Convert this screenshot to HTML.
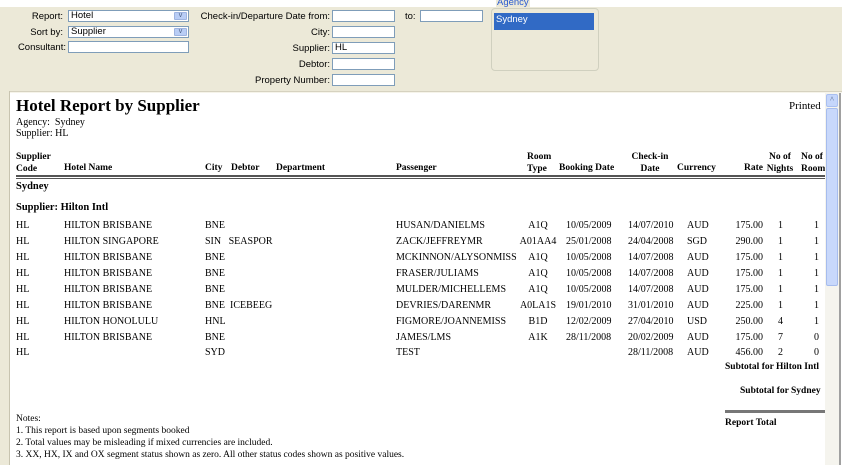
<!DOCTYPE html>
<html><head><meta charset="utf-8"><style>
*{margin:0;padding:0;box-sizing:border-box}
body{width:848px;height:465px;overflow:hidden;background:#fff;position:relative;font-family:"Liberation Serif",serif;font-size:10px;color:#000}
.a{position:absolute;white-space:nowrap}
.f{font-family:"Liberation Sans",sans-serif;font-size:9.5px;color:#000}
.in{position:absolute;height:12px;background:#fff;border:1px solid #7f9db9;font-family:"Liberation Sans",sans-serif;font-size:9.5px;line-height:10px;padding-left:2px}
.sel .ar{position:absolute;right:1px;top:1px;width:13px;height:8px;background:#b9cdf5;border:1px solid #9fb4e0;border-radius:1px;font-size:7px;line-height:6px;text-align:center;color:#4d6185}
.b{font-weight:bold}
.r{text-align:right}
.c{text-align:center}
</style></head><body>
<div class="a" style="left:0;top:7px;width:842px;height:84px;background:#ECE9D8"></div>
<div class="a" style="left:0;top:91px;width:10px;height:374px;background:#ECE9D8;border-right:1px solid #c8c4b0"></div>
<div class="a" style="left:10px;top:91px;width:832px;height:2px;background:#f6f4ea;border-top:1px solid #d6d2c0"></div>

<div class="a f r" style="left:0;width:63px;top:11px">Report:</div>
<div class="in sel" style="left:68px;top:10px;width:121px">Hotel<span class="ar">v</span></div>
<div class="a f r" style="left:0;width:63px;top:27px">Sort by:</div>
<div class="in sel" style="left:68px;top:26px;width:121px">Supplier<span class="ar">v</span></div>
<div class="a f r" style="left:0;width:66px;top:42px">Consultant:</div>
<div class="in" style="left:68px;top:41px;width:121px"></div>

<div class="a f r" style="left:150px;width:180px;top:11px">Check-in/Departure Date from:</div>
<div class="in" style="left:332px;top:10px;width:63px"></div>
<div class="a f" style="left:405px;top:11px">to:</div>
<div class="in" style="left:420px;top:10px;width:63px"></div>
<div class="a f r" style="left:150px;width:180px;top:27px">City:</div>
<div class="in" style="left:332px;top:26px;width:63px"></div>
<div class="a f r" style="left:150px;width:180px;top:43px">Supplier:</div>
<div class="in" style="left:332px;top:42px;width:63px">HL</div>
<div class="a f r" style="left:150px;width:180px;top:59px">Debtor:</div>
<div class="in" style="left:332px;top:58px;width:63px"></div>
<div class="a f r" style="left:150px;width:180px;top:75px">Property Number:</div>
<div class="in" style="left:332px;top:74px;width:63px"></div>

<div class="a" style="left:491px;top:8px;width:108px;height:63px;border:1px solid #d0d0bf;border-radius:4px"></div>
<div class="a f" style="left:496px;top:0px;color:#2a5bd0;background:#ECE9D8;padding:0 1px;height:8px;overflow:hidden;line-height:6px">Agency</div>
<div class="a f" style="left:494px;top:13px;width:100px;height:17px;background:#316AC5;color:#fff;padding:1px 2px">Sydney</div>

<div class="a" style="left:825px;top:93px;width:14px;height:372px;background:#f5f4ee"></div>
<div class="a" style="left:826px;top:94px;width:12px;height:13px;background:#c5d6fb;border:1px solid #a9bff0;border-radius:2px;font-size:8px;text-align:center;line-height:10px;color:#4d6185">^</div>
<div class="a" style="left:826px;top:108px;width:12px;height:178px;background:#c8d8fb;border:1px solid #a6bced;border-radius:2px"></div>
<div class="a" style="left:839px;top:93px;width:2px;height:372px;background:#a0a0a0"></div>

<div class="a b" style="left:16px;top:96px;font-size:17px">Hotel Report by Supplier</div>
<div class="a" style="left:789px;top:100px;font-size:11px">Printed</div>
<div class="a" style="left:16px;top:117px">Agency: &nbsp;Sydney</div>
<div class="a" style="left:16px;top:128px">Supplier: HL</div>

<div class="a b" style="left:16px;top:151px;font-size:9.5px;line-height:12px">Supplier<br>Code</div>
<div class="a b" style="left:64px;top:163px;font-size:9.5px">Hotel Name</div>
<div class="a b" style="left:205px;top:163px;font-size:9.5px">City</div>
<div class="a b" style="left:231px;top:163px;font-size:9.5px">Debtor</div>
<div class="a b" style="left:276px;top:163px;font-size:9.5px">Department</div>
<div class="a b" style="left:396px;top:163px;font-size:9.5px">Passenger</div>
<div class="a b" style="left:527px;top:151px;font-size:9.5px;line-height:12px">Room<br>Type</div>
<div class="a b" style="left:559px;top:163px;font-size:9.5px">Booking Date</div>
<div class="a b c" style="left:624px;width:52px;top:151px;font-size:9.5px;line-height:12px">Check-in<br>Date</div>
<div class="a b" style="left:677px;top:163px;font-size:9.5px">Currency</div>
<div class="a b" style="left:744px;top:163px;font-size:9.5px">Rate</div>
<div class="a b c" style="left:764px;width:32px;top:151px;font-size:9.5px;line-height:12px">No of<br>Nights</div>
<div class="a b" style="left:801px;top:151px;font-size:9.5px;line-height:12px;width:24px;overflow:hidden">No of<br>Rooms</div>
<div class="a" style="left:16px;top:175px;width:809px;height:4px;border-top:2px solid #555;border-bottom:1px solid #555"></div>

<div class="a b" style="left:16px;top:181px;font-size:10.5px">Sydney</div>
<div class="a b" style="left:16px;top:202px;font-size:10.5px">Supplier: Hilton Intl</div>

<div style="position:absolute;left:0;top:220px">
<div class="a" style="left:16px;top:0">HL</div><div class="a" style="left:64px;top:0">HILTON BRISBANE</div><div class="a" style="left:205px;top:0">BNE</div><div class="a" style="left:396px;top:0">HUSAN/DANIELMS</div><div class="a c" style="left:518px;width:40px;top:0">A1Q</div><div class="a" style="left:566px;top:0">10/05/2009</div><div class="a" style="left:628px;top:0">14/07/2010</div><div class="a" style="left:687px;top:0">AUD</div><div class="a r" style="left:720px;width:43px;top:0">175.00</div><div class="a" style="left:778px;top:0">1</div><div class="a" style="left:814px;top:0">1</div>
</div>
<div style="position:absolute;left:0;top:236px">
<div class="a" style="left:16px;top:0">HL</div><div class="a" style="left:64px;top:0">HILTON SINGAPORE</div><div class="a" style="left:205px;top:0">SIN &nbsp;&nbsp;SEASPOR</div><div class="a" style="left:396px;top:0">ZACK/JEFFREYMR</div><div class="a c" style="left:518px;width:40px;top:0">A01AA4</div><div class="a" style="left:566px;top:0">25/01/2008</div><div class="a" style="left:628px;top:0">24/04/2008</div><div class="a" style="left:687px;top:0">SGD</div><div class="a r" style="left:720px;width:43px;top:0">290.00</div><div class="a" style="left:778px;top:0">1</div><div class="a" style="left:814px;top:0">1</div>
</div>
<div style="position:absolute;left:0;top:252px">
<div class="a" style="left:16px;top:0">HL</div><div class="a" style="left:64px;top:0">HILTON BRISBANE</div><div class="a" style="left:205px;top:0">BNE</div><div class="a" style="left:396px;top:0">MCKINNON/ALYSONMISS</div><div class="a c" style="left:518px;width:40px;top:0">A1Q</div><div class="a" style="left:566px;top:0">10/05/2008</div><div class="a" style="left:628px;top:0">14/07/2008</div><div class="a" style="left:687px;top:0">AUD</div><div class="a r" style="left:720px;width:43px;top:0">175.00</div><div class="a" style="left:778px;top:0">1</div><div class="a" style="left:814px;top:0">1</div>
</div>
<div style="position:absolute;left:0;top:268px">
<div class="a" style="left:16px;top:0">HL</div><div class="a" style="left:64px;top:0">HILTON BRISBANE</div><div class="a" style="left:205px;top:0">BNE</div><div class="a" style="left:396px;top:0">FRASER/JULIAMS</div><div class="a c" style="left:518px;width:40px;top:0">A1Q</div><div class="a" style="left:566px;top:0">10/05/2008</div><div class="a" style="left:628px;top:0">14/07/2008</div><div class="a" style="left:687px;top:0">AUD</div><div class="a r" style="left:720px;width:43px;top:0">175.00</div><div class="a" style="left:778px;top:0">1</div><div class="a" style="left:814px;top:0">1</div>
</div>
<div style="position:absolute;left:0;top:284px">
<div class="a" style="left:16px;top:0">HL</div><div class="a" style="left:64px;top:0">HILTON BRISBANE</div><div class="a" style="left:205px;top:0">BNE</div><div class="a" style="left:396px;top:0">MULDER/MICHELLEMS</div><div class="a c" style="left:518px;width:40px;top:0">A1Q</div><div class="a" style="left:566px;top:0">10/05/2008</div><div class="a" style="left:628px;top:0">14/07/2008</div><div class="a" style="left:687px;top:0">AUD</div><div class="a r" style="left:720px;width:43px;top:0">175.00</div><div class="a" style="left:778px;top:0">1</div><div class="a" style="left:814px;top:0">1</div>
</div>
<div style="position:absolute;left:0;top:300px">
<div class="a" style="left:16px;top:0">HL</div><div class="a" style="left:64px;top:0">HILTON BRISBANE</div><div class="a" style="left:205px;top:0">BNE &nbsp;ICEBEEG</div><div class="a" style="left:396px;top:0">DEVRIES/DARENMR</div><div class="a c" style="left:518px;width:40px;top:0">A0LA1S</div><div class="a" style="left:566px;top:0">19/01/2010</div><div class="a" style="left:628px;top:0">31/01/2010</div><div class="a" style="left:687px;top:0">AUD</div><div class="a r" style="left:720px;width:43px;top:0">225.00</div><div class="a" style="left:778px;top:0">1</div><div class="a" style="left:814px;top:0">1</div>
</div>
<div style="position:absolute;left:0;top:316px">
<div class="a" style="left:16px;top:0">HL</div><div class="a" style="left:64px;top:0">HILTON HONOLULU</div><div class="a" style="left:205px;top:0">HNL</div><div class="a" style="left:396px;top:0">FIGMORE/JOANNEMISS</div><div class="a c" style="left:518px;width:40px;top:0">B1D</div><div class="a" style="left:566px;top:0">12/02/2009</div><div class="a" style="left:628px;top:0">27/04/2010</div><div class="a" style="left:687px;top:0">USD</div><div class="a r" style="left:720px;width:43px;top:0">250.00</div><div class="a" style="left:778px;top:0">4</div><div class="a" style="left:814px;top:0">1</div>
</div>
<div style="position:absolute;left:0;top:332px">
<div class="a" style="left:16px;top:0">HL</div><div class="a" style="left:64px;top:0">HILTON BRISBANE</div><div class="a" style="left:205px;top:0">BNE</div><div class="a" style="left:396px;top:0">JAMES/LMS</div><div class="a c" style="left:518px;width:40px;top:0">A1K</div><div class="a" style="left:566px;top:0">28/11/2008</div><div class="a" style="left:628px;top:0">20/02/2009</div><div class="a" style="left:687px;top:0">AUD</div><div class="a r" style="left:720px;width:43px;top:0">175.00</div><div class="a" style="left:778px;top:0">7</div><div class="a" style="left:814px;top:0">0</div>
</div>
<div style="position:absolute;left:0;top:347px">
<div class="a" style="left:16px;top:0">HL</div><div class="a" style="left:205px;top:0">SYD</div><div class="a" style="left:396px;top:0">TEST</div><div class="a" style="left:628px;top:0">28/11/2008</div><div class="a" style="left:687px;top:0">AUD</div><div class="a r" style="left:720px;width:43px;top:0">456.00</div><div class="a" style="left:778px;top:0">2</div><div class="a" style="left:814px;top:0">0</div>
</div>

<div class="a b" style="left:725px;top:362px;font-size:9.5px">Subtotal for Hilton Intl</div>
<div class="a b" style="left:740px;top:386px;font-size:9.5px">Subtotal for Sydney</div>
<div class="a" style="left:725px;top:410px;width:100px;height:3px;background:#777"></div>
<div class="a b" style="left:725px;top:418px;font-size:9.5px">Report Total</div>

<div class="a" style="left:16px;top:413px;font-size:9.5px;line-height:12px">Notes:<br>1. This report is based upon segments booked<br>2. Total values may be misleading if mixed currencies are included.<br>3. XX, HX, IX and OX segment status shown as zero. All other status codes shown as positive values.</div>
</body></html>
